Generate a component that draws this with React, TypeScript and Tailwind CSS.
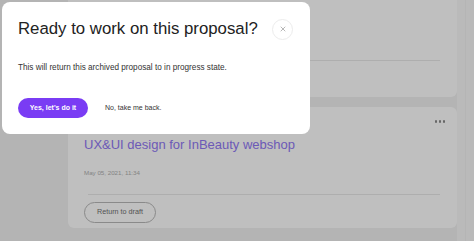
import { X } from "lucide-react"

const font = { fontFamily: "'Liberation Sans', Arial, sans-serif" }

export default function App() {
  return (
    <div className="relative h-[241px] w-[474px] overflow-hidden bg-[#f0f0f0]" style={font}>
      {/* page behind the dialog */}
      <div className="flex h-full">
        <div className="w-[68px] shrink-0" />
        <main className="flex w-[389px] shrink-0 flex-col gap-[10px]">
          <section className="flex h-[97px] flex-col rounded-b-md bg-white">
            <div className="mt-[60px] ml-[20px] mr-[17px] h-px bg-[#e8e8e8]" />
          </section>
          <section className="relative flex h-[121px] flex-col rounded-md bg-white px-4">
            <div className="absolute right-[12px] top-[13px] flex gap-[1.5px]">
              <span className="h-[2.5px] w-[2.5px] rounded-full bg-[#8a8a8a]" />
              <span className="h-[2.5px] w-[2.5px] rounded-full bg-[#8a8a8a]" />
              <span className="h-[2.5px] w-[2.5px] rounded-full bg-[#8a8a8a]" />
            </div>
            <h3 className="mt-[30px] text-[13px] leading-4 text-[#9178f4]">UX&amp;UI design for InBeauty webshop</h3>
            <p className="mt-[16px] text-[6.2px] leading-[8px] text-[#b0b0b0]">May 05, 2021, 11:34</p>
            <div className="mt-[17px] ml-1 mr-[1px] h-px bg-[#e8e8e8]" />
            <button className="mt-[7px] h-[21px] w-[72px] rounded-full border border-[#b8b8b8] text-[7.2px] text-[#707070]">
              Return to draft
            </button>
          </section>
        </main>
        <div className="flex flex-1 justify-center bg-[#f8f8f8]">
          <div className="w-px bg-[#f2f2f2]" />
        </div>
      </div>

      {/* overlay */}
      <div className="absolute inset-0 bg-black/25" />

      {/* dialog */}
      <div className="absolute left-[2px] top-[2px] flex h-[132px] w-[308px] flex-col rounded-lg bg-white px-4 pt-[15px]">
        <div className="flex items-center justify-between">
          <h2 className="whitespace-nowrap text-[16.8px] leading-6 text-[#222]">Ready to work on this proposal?</h2>
          <button className="mr-[1px] flex h-[21px] w-[21px] items-center justify-center rounded-full border border-[#ececec] text-[#777]">
            <X size={8} strokeWidth={1.6} />
          </button>
        </div>
        <p className="mt-[21px] text-[8.2px] leading-[12px] text-[#333]">
          This will return this archived proposal to in progress state.
        </p>
        <div className="mt-[24px] flex items-center gap-[17px]">
          <button className="h-[20px] w-[70px] rounded-full bg-[#7a3cf4] text-[7px] font-bold text-white">
            Yes, let&apos;s do it
          </button>
          <button className="text-[7px] text-[#333]">No, take me back.</button>
        </div>
      </div>
    </div>
  )
}
